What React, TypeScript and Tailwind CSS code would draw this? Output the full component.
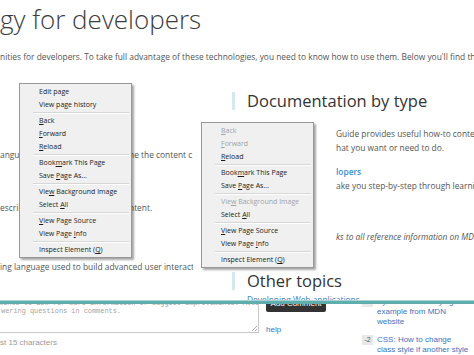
import type { ReactNode } from "react";

type Item = { label: ReactNode; off?: boolean } | "sep";

function K({ children }: { children: ReactNode }) {
  return <span className="underline decoration-1 underline-offset-[1px]">{children}</span>;
}

function Menu({ items, className }: { items: Item[]; className: string }) {
  return (
    <div
      className={`absolute w-[113px] border border-[#979797] bg-[#f0f0f0] py-[1px] font-['Open_Sans',sans-serif] shadow-[2px_2px_2px_rgba(0,0,0,0.35)] ${className}`}
    >
      {items.map((it, i) =>
        it === "sep" ? (
          <div key={i} className="mt-[1px] ml-[13px] mr-[2px] h-[2px] border-b border-white bg-[#d7d7d7]" />
        ) : (
          <div
            key={i}
            className={`h-[13px] whitespace-nowrap pl-[19px] text-[7px] leading-[13px] ${it.off ? "text-[#a3a3a3]" : "text-[#1b1b1b]"}`}
          >
            {it.label}
          </div>
        )
      )}
    </div>
  );
}

const menuA: Item[] = [
  { label: "Edit page" },
  { label: "View page history" },
  "sep",
  { label: <><K>B</K>ack</> },
  { label: <><K>F</K>orward</> },
  { label: <><K>R</K>eload</> },
  "sep",
  { label: <>Book<K>m</K>ark This Page</> },
  { label: <>Save <K>P</K>age As...</> },
  "sep",
  { label: <>Vie<K>w</K> Background Image</> },
  { label: <>Select <K>A</K>ll</> },
  "sep",
  { label: <><K>V</K>iew Page Source</> },
  { label: <>View Page <K>I</K>nfo</> },
  "sep",
  { label: <>Inspect Element (<K>Q</K>)</> },
];

const menuB: Item[] = [
  { label: <><K>B</K>ack</>, off: true },
  { label: <><K>F</K>orward</>, off: true },
  { label: <><K>R</K>eload</> },
  "sep",
  { label: <>Book<K>m</K>ark This Page</> },
  { label: <>Save <K>P</K>age As...</> },
  "sep",
  { label: <>Vie<K>w</K> Background Image</>, off: true },
  { label: <>Select <K>A</K>ll</> },
  "sep",
  { label: <><K>V</K>iew Page Source</> },
  { label: <>View Page <K>I</K>nfo</> },
  "sep",
  { label: <>Inspect Element (<K>Q</K>)</> },
];

export default function App() {
  return (
    <div className="h-[355px] w-[474px] overflow-hidden bg-white">
      {/* MDN page */}
      <section className="relative h-[300px] overflow-hidden font-['Open_Sans',sans-serif]">
        <h1 className="whitespace-nowrap pt-[2px] text-[26px] font-light leading-[34px] text-[#3b3c40]">
          gy for developers
        </h1>
        <p className="mt-[14px] whitespace-nowrap text-[8.4px] leading-[14px] text-[#555]">
          nities for developers. To take full advantage of these technologies, you need to know how to use them. Below you'll find the
        </p>

        <div className="mt-[24px] flex text-[8.4px] leading-[14px] text-[#555]">
          <div className="w-[193px] shrink-0 overflow-hidden whitespace-nowrap">
            <div className="mt-[60px] flex">
              <span className="w-[129px] shrink-0 overflow-hidden">anguage used to defi</span>
              <span>ne the content c</span>
            </div>
            <div className="mt-[39px] flex">
              <span className="w-[129px] shrink-0 overflow-hidden">escribe the look of co</span>
              <span>ntent.</span>
            </div>
            <div className="mt-[45px]">ing language used to build advanced user interactive</div>
          </div>

          <div className="ml-[39px] min-w-0 flex-1 whitespace-nowrap">
            <h2 className="mt-[4px] h-[18px] border-l-[3px] border-[#d3e8f1] pl-[12px] text-[16.5px] leading-[18px] text-[#333]">
              Documentation by type
            </h2>
            <div className="pl-[104px]">
              <div className="mt-[17px]">Guide provides useful how-to content</div>
              <div>hat you want or need to do.</div>
              <div className="mt-[10px] font-semibold text-[#3a8fd4]">lopers</div>
              <div>ake you step-by-step through learning</div>
              <div className="mt-[37px] italic">ks to all reference information on MDN</div>
            </div>
            <h2 className="mt-[28px] h-[18px] border-l-[3px] border-[#d3e8f1] pl-[12px] text-[16.5px] leading-[18px] text-[#333]">
              Other topics
            </h2>
            <div className="mt-[3px] pl-[15px] text-[#3d7fc0]">Developing Web applications</div>
          </div>
        </div>

        <Menu items={menuA} className="left-[19px] top-[83px]" />
        <Menu items={menuB} className="left-[201px] top-[122px]" />
      </section>

      <div className="h-[4px] border-t border-[#a9d4d4] bg-[#5fadad]" />

      {/* Stack Overflow comment box */}
      <section className="h-[51px] overflow-hidden font-['Liberation_Sans',Arial,sans-serif] text-[8px]">
        <div className="-mt-[20px] flex">
          <div className="w-[259px] shrink-0">
            <div className="relative -ml-[2px] h-[49px] border border-[#c8c8c8] pt-[6px] font-['Liberation_Mono',monospace] text-[6.9px] leading-[8px] whitespace-nowrap text-[#a5a5a5]">
              <div className="overflow-hidden">pful. Use comments to ask for more information or suggest</div>
              <div className="overflow-hidden">ments to ask for more information or suggest improvements. Avoid an</div>
              <div className="pl-[2px]">wering questions in comments.</div>
              <svg className="absolute right-[1px] bottom-[1px]" width="6" height="6" viewBox="0 0 6 6">
                <path d="M6 1 L1 6 M6 4 L4 6" stroke="#9a9a9a" strokeWidth="0.8" />
              </svg>
            </div>
            <div className="mt-[4px] leading-[12px] text-[#9a9a9a]">st 15 characters</div>
          </div>

          <div className="ml-[7px] w-[96px] shrink-0">
            <div className="mt-[12px] flex h-[16px] w-[60px] items-center justify-center rounded-[2px] bg-[#333] text-white">
              Add Comment
            </div>
            <div className="mt-[12px] leading-[12px] text-[#3b73c4]">help</div>
          </div>

          <div className="min-w-0 flex-1 whitespace-nowrap leading-[10px] text-[#3b73c4]">
            <div className="mt-[13px] flex">
              <span className="mr-[4px] h-[10px] w-[11px] shrink-0 bg-[#e8e8e8] text-center text-[7px] text-[#555]">0</span>
              <span>
                Syntax error on trying an
                <br />
                example from MDN
                <br />
                website
              </span>
            </div>
            <div className="mt-[8px] flex">
              <span className="mr-[4px] h-[10px] w-[11px] shrink-0 bg-[#e8e8e8] text-center text-[7px] text-[#555]">-2</span>
              <span>
                CSS: How to change
                <br />
                class style if another style
              </span>
            </div>
          </div>
        </div>
      </section>
    </div>
  );
}
